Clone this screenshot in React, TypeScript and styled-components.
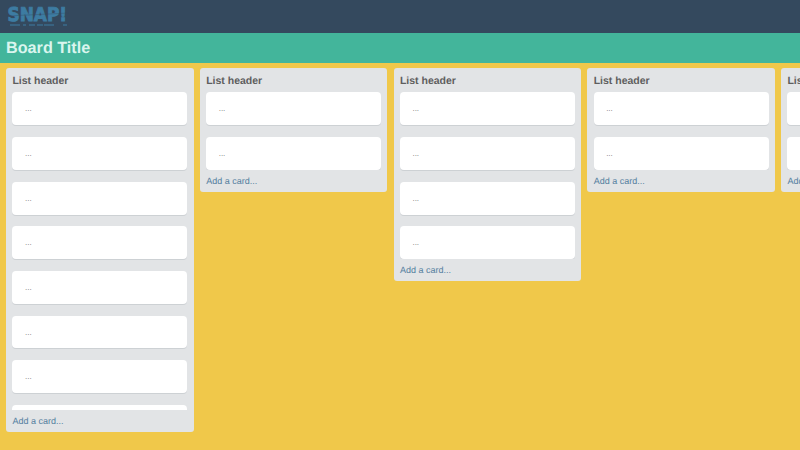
import React from "react";
import styled, { createGlobalStyle } from "styled-components";

const GlobalStyle = createGlobalStyle`
  html, body {
    margin: 0;
    padding: 0;
    height: 100%;
    overflow: hidden;
    font-family: "Liberation Sans", Arial, sans-serif;
    text-rendering: geometricPrecision;
    -webkit-font-smoothing: antialiased;
  }
`;

const Page = styled.div`
  width: 800px;
  height: 450px;
  display: flex;
  flex-direction: column;
  background-color: #f0c84a;
  overflow: hidden;
  opacity: 0.999;
`;

const TopBar = styled.header`
  height: 32.5px;
  flex: none;
  display: flex;
  align-items: center;
  padding-left: 7px;
  background-color: #34495e;
`;

const Logo = styled.svg`
  display: block;
  width: 72px;
  height: 26px;
`;

const TitleBar = styled.div`
  height: 30.2px;
  flex: none;
  box-sizing: border-box;
  display: flex;
  align-items: center;
  padding: 1.5px 0 0 6px;
  background-color: #43b59b;
`;

const BoardTitle = styled.h1`
  margin: 0;
  font-size: 16.2px;
  font-weight: 700;
  color: #daf5ee;
`;

const Board = styled.main`
  flex: 1;
  display: flex;
  align-items: flex-start;
  gap: 6.35px;
  padding: 5.3px 0 0 6.25px;
  min-height: 0;
`;

const List = styled.section`
  flex: none;
  width: 187.4px;
  max-height: 364.4px;
  display: flex;
  flex-direction: column;
  box-sizing: border-box;
  padding: 0 6.2px;
  background-color: #e2e4e6;
  border-radius: 3px;
`;

const ListHeader = styled.h2`
  margin: 0;
  height: 24.4px;
  flex: none;
  font-size: 10.5px;
  line-height: 26px;
  font-weight: 700;
  color: #5e5e5e;
`;

const Cards = styled.div`
  flex: 1;
  min-height: 0;
  overflow: hidden;
  display: flex;
  flex-direction: column;
  gap: 11.75px;
`;

const Card = styled.div`
  flex: none;
  height: 32.9px;
  box-sizing: border-box;
  padding-left: 12.5px;
  font-size: 8px;
  line-height: 33px;
  color: #808080;
  background-color: #fff;
  border-radius: 4px;
  box-shadow: 0 1px 0 #cdd1d4;
`;

const AddCard = styled.a`
  flex: none;
  height: 22px;
  font-size: 9px;
  line-height: 23px;
  color: #5580a0;
`;

const cardCounts = [8, 2, 4, 2, 2];

const App = () => {
  return (
    <Page>
      <GlobalStyle />
      <TopBar>
        <Logo viewBox="0 0 72 26">
          <text
            x="0.5"
            y="18"
            fontFamily="DejaVu Sans, sans-serif"
            fontSize="19"
            fontWeight="700"
            fill="#3d7ca2"
            stroke="#3d7ca2"
            strokeWidth="0.9"
            textLength="59.5"
            lengthAdjust="spacingAndGlyphs"
          >
            SNAP!
          </text>
          <path d="M0 13 L62 10" stroke="#34495e" strokeWidth="0.5" opacity="0.7" />
          <path
            d="M3 22h10M16 22h3M22 22h6M30 22h6M37 22h10M56 22h4"
            stroke="#3d7ca2"
            strokeWidth="1"
          />
        </Logo>
      </TopBar>
      <TitleBar>
        <BoardTitle>Board Title</BoardTitle>
      </TitleBar>
      <Board>
        {cardCounts.map((count, i) => (
          <List key={i}>
            <ListHeader>List header</ListHeader>
            <Cards>
              {Array.from({ length: count }).map((_, j) => (
                <Card key={j}>...</Card>
              ))}
            </Cards>
            <AddCard>Add a card...</AddCard>
          </List>
        ))}
      </Board>
    </Page>
  );
};

export default App;
